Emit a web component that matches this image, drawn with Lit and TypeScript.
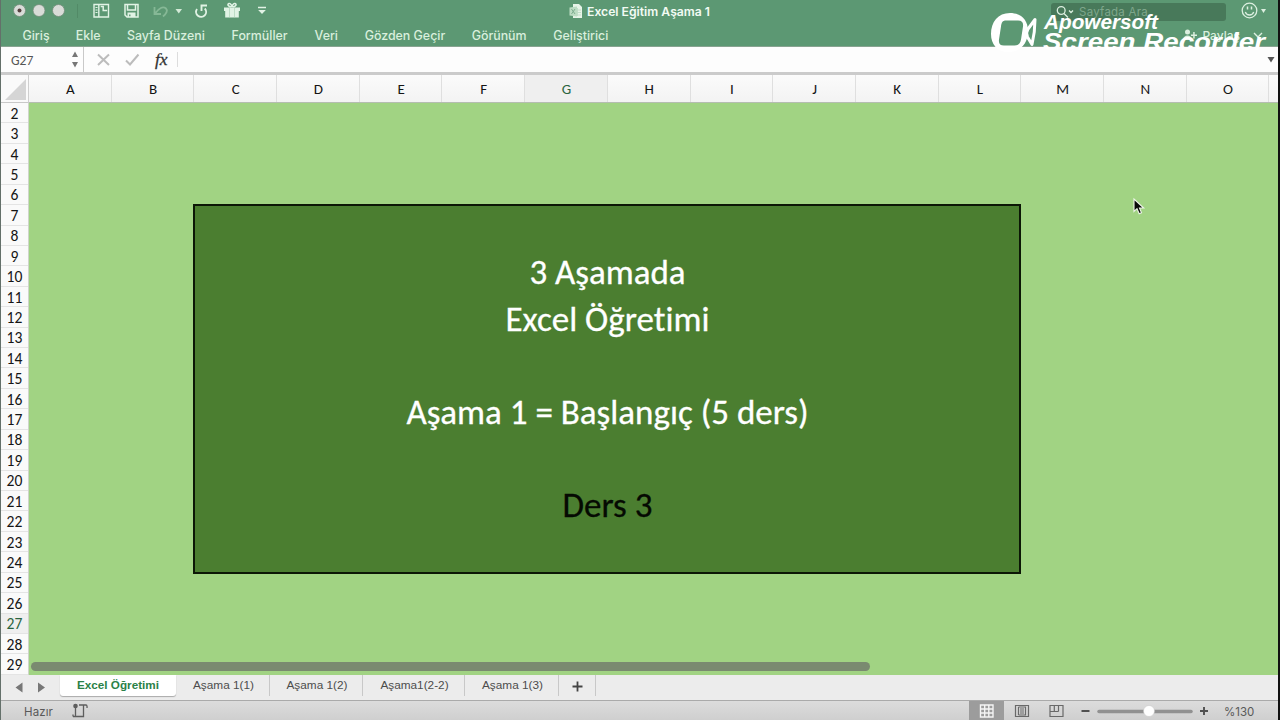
import { LitElement, html, svg, css } from "lit";
import { customElement } from "lit/decorators.js";
import { classMap } from "lit/directives/class-map.js";

const MENUS: [string, number][] = [
  ["Giriş", 28], ["Ekle", 26], ["Sayfa Düzeni", 79], ["Formüller", 58],
  ["Veri", 25], ["Gözden Geçir", 82], ["Görünüm", 56], ["Geliştirici", 57],
];
const COLUMNS = "ABCDEFGHIJKLMNO".split("");
const ROWS = Array.from({ length: 28 }, (_, i) => i + 2);
const TABS: [string, number][] = [
  ["Excel Öğretimi", 116], ["Aşama 1(1)", 94], ["Aşama 1(2)", 93],
  ["Aşama1(2-2)", 102], ["Aşama 1(3)", 94],
];

@customElement("title-bar")
class TitleBar extends LitElement {
  static styles = css`
    :host { display: block; height: 46px; background: #5c9873; color: #e6f5e9; font-family: Inter, "Liberation Sans", sans-serif; }
    .top { display: grid; grid-template-columns: 569px 482px 175px 1fr; height: 22px; align-items: center; }
    .quick { display: block; }
    .title { display: flex; align-items: center; gap: 4px; font-size: 12.2px; font-weight: 600; color: #f2fbf3; height: 22px; white-space: nowrap; }
    .title svg { display: block; }
    .search { height: 18px; background: #48795a; border-radius: 3px; display: flex; align-items: center; gap: 4px; padding-left: 5px; box-sizing: border-box; font-size: 11.5px; color: #7fa78c; letter-spacing: .25px; margin-top: 1px; }
    .face { display: block; margin-left: 14px; }
    .menu { display: flex; height: 26px; align-items: center; padding-left: 22px; gap: 25.2px; font-size: 12.4px; font-weight: 500; color: #d9efdd; }
    .item { display: flex; justify-content: center; white-space: nowrap; height: 20px; line-height: 22px; }
    .share { margin-left: auto; margin-right: 14px; display: flex; align-items: center; gap: 4px; font-size: 12px; height: 22px; }
    .chev { margin-left: 8px; }
  `;
  render() {
    return html`
      <div class="top">
        <svg class="quick" width="569" height="22" fill="none" stroke="#e1f3e5" stroke-width="1.5">
          <g fill="#d9dcd8" stroke="#718b78" stroke-width=".8"><circle cx="19.5" cy="10.500" r="6"/><circle cx="39" cy="10.500" r="6"/><circle cx="58.5" cy="10.500" r="6"/></g>
          <circle cx="19.5" cy="10.500" r="2" fill="#55423f" stroke="none"/>
          <path d="M77.5 4v14" stroke="#528a67" stroke-width="1"/>
          <path d="M94 4.500h14.500v12.500H94zM98.800 4.500V17" stroke-width="1.400"/><path d="M95.500 7.500h2M95.500 10h2M95.500 12.500h2" stroke-width="1"/><path d="M100.700 6.500h2.500v4h4" stroke-width="1.500"/>
          <path d="M125 4.500h13v12.500h-11l-2-2zM127.500 4.500v5.500h8V4.500" /><path d="M127.500 12.500h8v4.500h-5v-2.500h-1.400v2.500h-1.600z" fill="#e1f3e5" stroke="none"/>
          <path d="M154.500 7v7h6.500M155 13.500c4-5.500 8-7.500 11-5 2 2 .5 5-3 8" stroke="#86b896" stroke-width="1.800"/>
          <path d="M175.500 9h6.500l-3.200 4.500z" fill="#d3ead7" stroke="none"/>
          <path d="M197 9a5 5 0 1 0 7.800-.5M201.500 11V5.500h5.500" stroke-width="1.900"/>
          <path d="M224 7.500h16v3.500h-1.200v6.500h-13.600V11H224z" fill="#e1f3e5" stroke="none"/>
          <path d="M231.500 7c-3.500 0-4.500-3-2.500-3.500s3 3 3 3.500c0-.5 1-4 3-3.500s1 3.500-2.500 3.500" stroke-width="1.600"/><path d="M229.500 8v9.500M234.500 8v9.500" stroke="#a5cfb0" stroke-width=".6"/>
          <path d="M258 7.500h8" /><path d="M258.200 10h7.600L262 14z" fill="#e1f3e5" stroke="none"/>
        </svg>
        <div class="title">
          <svg width="14" height="16"><path d="M4 1h6l3 3v11H4z" fill="#e7f4e8"/><path d="M0.500 4.500 8 3.500v10L.5 12.500z" fill="#bcdcc3"/><path d="m2.500 6 3.500 5M6 6l-3.500 5" stroke="#7fae90"/><path d="M8.500 5v8M8.500 7H12M8.500 9.500H12M8.500 12H12" stroke="#b9d9c0" stroke-width=".8"/></svg>
          <span>Excel Eğitim Aşama 1</span>
        </div>
        <div class="search">
          <svg width="19" height="14" fill="none" stroke="#dcefe0" stroke-width="1.300"><circle cx="5.200" cy="5.500" r="3.900"/><path d="m8 8.500 4 4M13 5.500l2 2 2-2"/></svg>
          <span>Sayfada Ara</span>
        </div>
        <svg class="face" width="32" height="20" fill="none" stroke="#dcefe0" stroke-width="1.300"><circle cx="9.500" cy="9.500" r="7.300"/><path d="M5.300 11c1.500 4 6.900 4 8.400 0"/><path d="M7.500 5.500v3M11.500 5.500v3" stroke-width="1.500"/><path d="M21 8h5l-2.500 4z" fill="#dcefe0" stroke="none"/></svg>
      </div>
      <div class="menu">
        ${MENUS.map(([t, w]) => html`<span class="item" style="width:${w}px">${t}</span>`)}
        <div class="share">
          <svg width="15" height="14" fill="#dcefe0"><circle cx="4.500" cy="4" r="2.500"/><path d="M0 12c0-6 9-6 9 0zM10.200 4h1.500v2.500H14V8h-2.300v2.500h-1.500V8H8V6.500h2.200z"/></svg>
          <span>Paylaş</span>
          <svg class="chev" width="12" height="8" fill="none" stroke="#dcefe0" stroke-width="1.400"><path d="m2 2 4 4 4-4"/></svg>
        </div>
      </div>`;
  }
}

@customElement("formula-bar")
class FormulaBar extends LitElement {
  static styles = css`
    :host { display: flex; height: 29px; box-sizing: border-box; background: #fdfdfd; border-bottom: 3px solid #cbcbcb; border-top: 1px solid #88a391; align-items: center; }
    .name { width: 84px; height: 25px; box-sizing: border-box; border-right: 1px solid #c9c9c9; display: flex; align-items: center; justify-content: space-between; padding: 1px 4px 0 11px; font: 13.6px Carlito, Lato, sans-serif; color: #555; }
    .icons { display: block; }
    .fx { font: italic 17.5px "Liberation Serif", serif; color: #333; -webkit-text-stroke: .3px #333; width: 22px; margin-left: 8px; line-height: 20px; margin-top: -2px; }
    .rule { width: 1px; height: 15px; background: #ddd; }
    .drop { margin-left: auto; margin-right: 3px; }
  `;
  render() {
    return html`
      <div class="name"><span>G27</span><svg width="8" height="18" fill="#777"><path d="M1 6 4 .5 7 6zM1 11h6l-3 5.500z"/></svg></div>
      <svg class="icons" width="63" height="24" fill="none" stroke="#bcbcbc" stroke-width="2"><path d="m14 6.500 11 10.500M25 6.500 14 17M42 12.500l4 4L54.500 6.500"/></svg>
      <span class="fx">fx</span><span class="rule"></span>
      <svg class="drop" width="8" height="7"><path d="M.5 1h7L4 6.500z" fill="#555"/></svg>`;
  }
}

@customElement("work-sheet")
class WorkSheet extends LitElement {
  static styles = css`
    :host { display: grid; grid-template: 28px 572px / 29px 1fr; background: #fafafa; font-family: Carlito, Lato, sans-serif; color: #151515; font-variant-ligatures: none; }
    .corner { display: flex; justify-content: flex-end; align-items: flex-end; border-right: 1px solid #cfcfcf; border-bottom: 1px solid #c8c8c8; padding: 0 2px 2px 0; }
    .heads { display: flex; background: linear-gradient(#fbfbfb, #f3f3f3); border-bottom: 1px solid #b5bdb1; overflow: hidden; }
    .head { flex: 0 0 82.7px; box-sizing: border-box; border-right: 1px solid #dfdfdf; display: flex; align-items: center; justify-content: center; font-size: 15px; padding: 1px 0 0 1px; }
    .rows { display: grid; grid-template-rows: repeat(28, 20.43px); border-right: 1px solid #cfd5ca; overflow: hidden; }
    .row { box-sizing: border-box; border-bottom: 1px solid #e4e4e4; display: flex; align-items: center; justify-content: center; font-size: 15.6px; line-height: 18px; padding: 2px 0 0 1px; }
    .active { background: #efefef; color: #2b6440; }
    .canvas { background: #a1d383; display: flex; flex-direction: column; overflow: hidden; }
    .box { margin: 101px 0 0 164px; width: 828px; height: 370px; box-sizing: border-box; border: 2px solid #0c1706; background: #4b7e30; display: flex; flex-direction: column; align-items: center; justify-content: center; color: #fff; font-size: 35px; line-height: 46.5px; white-space: pre; padding: 0 0 1px 1px; }
    .line { height: 46.5px; -webkit-text-stroke: .3px currentColor; }
    .dark { color: #050a02; }
    .scroll { width: 839px; height: 9px; border-radius: 5px; background: #7a8a70; margin: 88px 0 0 2px; }
  `;
  render() {
    return html`
      <div class="corner"><svg width="21" height="21"><path d="M21 0v21H0z" fill="#d5d5d5"/></svg></div>
      <div class="heads">${COLUMNS.map(c => html`<div class=${classMap({ head: true, active: c === "G" })}>${c}</div>`)}</div>
      <div class="rows">${ROWS.map(r => html`<div class=${classMap({ row: true, active: r === 27 })}>${r}</div>`)}</div>
      <div class="canvas">
        <div class="box">
          <div class="line">3 Aşamada</div><div class="line">Excel Öğretimi</div><div class="line"></div>
          <div class="line">Aşama 1 = Başlangıç (5 ders)</div><div class="line"></div><div class="line dark">Ders 3</div>
        </div>
        <div class="scroll"></div>
      </div>`;
  }
}

@customElement("sheet-tabs")
class SheetTabs extends LitElement {
  static styles = css`
    :host { display: flex; height: 25px; background: #ececec; font: 11.8px "Liberation Sans", sans-serif; color: #4c4c4c; }
    .nav { width: 60px; }
    .tab { height: 21px; box-sizing: border-box; border-right: 1px solid #c8c8c8; display: flex; align-items: center; justify-content: center; white-space: nowrap; padding: 0 0 2px 2px; }
    .on { background: #fff; color: #2a8147; font-weight: bold; font-size: 11.7px; border-radius: 0 0 3px 3px; box-shadow: 0 1px 1px #aaa; border: 0; padding-left: 0; }
    .add { width: 37px; height: 21px; box-sizing: border-box; border-right: 1px solid #c8c8c8; }
  `;
  render() {
    return html`
      <svg class="nav" height="25" fill="#777"><path d="M22.500 7.500v10L15.500 12.500zM38 7.500v10l7-5z"/></svg>
      ${TABS.map(([t, w], i) => html`<div class=${classMap({ tab: true, on: i === 0 })} style="width:${w}px">${t}</div>`)}
      <div class="add"><svg width="36" height="21"><path d="M13.500 11.500h10M18.500 6.500v10" stroke="#444" stroke-width="1.800"/></svg></div>`;
  }
}

@customElement("status-bar")
class StatusBar extends LitElement {
  static styles = css`
    :host { display: flex; height: 20px; box-sizing: border-box; border-top: 1px solid #aaa; background: linear-gradient(#dcdcdc, #cfcfcf); font: 11.5px Inter, sans-serif; color: #595959; align-items: center; }
    .ready { width: 48px; padding: 3px 0 0 24px; letter-spacing: .1px; }
    .rec { display: block; }
    .tools { margin-left: auto; display: block; }
    .zoom { width: 54px; padding-top: 3px; white-space: nowrap; }
  `;
  render() {
    return html`
      <span class="ready">Hazır</span>
      <svg class="rec" width="18" height="19" fill="none" stroke="#5e5e5e" stroke-width="1.300"><circle cx="3.500" cy="5" r="2.300" fill="#5e5e5e" stroke="none"/><path d="M3.500 6v9M1 15.500h10.500V4.500M7 4h7c1.500 0 1 3 1 3M1 15.500v-2"/></svg>
      <svg class="tools" width="255" height="19" fill="none" stroke="#696969" stroke-width="1.200">
        <path d="M0 0h35v19H0z" fill="#9c9c9c" stroke="none"/>
        <path d="M11.500 4h12.500v12H11.500zM15.700 4v12M19.800 4v12M11.500 8h12.500M11.500 12h12.500" stroke="#f4f4f4" stroke-width="1.400"/>
        <path d="M46.500 4.500h13v11h-13zM49.500 6h7v8h-7M49.500 6v8M51 8h4M51 10h4M51 12h4"/>
        <path d="M81 4.500h13v11H81zM85.300 4.500v6M89.500 4.500v6M81 10.500h8.500"/>
        <path d="M112.500 10h8M231 10h8M235 6v8" stroke="#505050" stroke-width="1.900"/>
        <path d="M130 10.500h92" stroke="#919191" stroke-width="3.500" stroke-linecap="round"/><circle cx="180" cy="10" r="5.500" fill="#fff" stroke="#c5c5c5" stroke-width=".5"/>
      </svg>
      <span class="zoom">%130</span>`;
  }
}

@customElement("app-root")
class AppRoot extends LitElement {
  static styles = css`
    :host { display: block; width: 1280px; height: 720px; background: #111; overflow: hidden; position: relative; }
    .window { width: 1278px; height: 720px; display: flex; flex-direction: column; }
    .edge { position: absolute; left: 0; top: 0; width: 1px; height: 720px; background: #64706a; }
    .mark { position: absolute; left: 985px; top: 8px; }
    .cursor { position: absolute; left: 1132px; top: 197px; }
  `;
  render() {
    return html`
      <div class="window">
        <title-bar></title-bar><formula-bar></formula-bar><work-sheet></work-sheet><sheet-tabs></sheet-tabs><status-bar></status-bar>
      </div>
      <div class="edge"></div>
      <svg class="mark" width="290" height="52">
        ${svg`
        <path fill="#fff" fill-rule="evenodd" d="M25 5C13 5 6 14 6 26c0 10 6 18 17 18 12 0 20-8 20-21C43 12 36 5 25 5zM21 12.500h12c4 0 5.500 2 5 6l-2 13c-.6 4-2.500 6-6.500 6H19c-4 0-5.500-2-5-6l2-13c.5-4 1.500-6 5-6z"/>
        <path d="M50 11.500 43 21q-2.500 4-.5 8l4.500 7.500q3-12 3-25z" fill="none" stroke="#fff" stroke-width="3" stroke-linejoin="round"/>
        <g fill="#fff" font-family="Liberation Sans" font-style="italic" font-weight="bold">
          <text x="59" y="21" font-size="19.500" textLength="114" lengthAdjust="spacingAndGlyphs">Apowersoft</text>
          <text x="58" y="42" font-size="24" textLength="222" lengthAdjust="spacingAndGlyphs">Screen Recorder</text>
        </g>`}
      </svg>
      <svg class="cursor" width="14" height="20"><path d="M2 2v12.500l3-2.800 2.200 5 2.300-1-2-4.700h4.200z" fill="#080808" stroke="#eef5e9" stroke-width="1.100"/></svg>`;
  }
}
